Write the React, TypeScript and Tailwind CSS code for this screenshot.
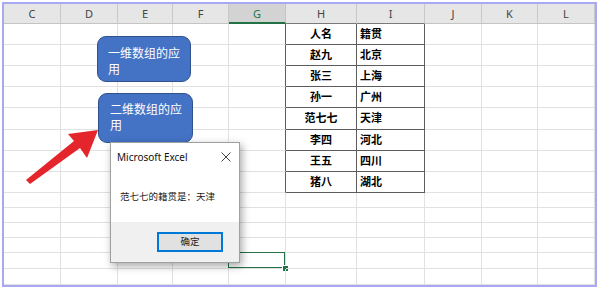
import React from "react"

const cols = ['C', 'D', 'E', 'F', 'G', 'H', 'I', 'J', 'K', 'L']
const names = ['人名', '赵九', '张三', '孙一', '范七七', '李四', '王五', '猪八']
const places = ['籍贯', '北京', '上海', '广州', '天津', '河北', '四川', '湖北']
const rowCount = 14

function HeaderCell({ col }: { col: string }) {
    const selected = col === 'G'
    const inTable = col === 'H' || col === 'I'
    return (
        <div
            className={`flex items-center justify-center border-r border-b text-[11px] leading-none ${selected
                ? 'bg-[#d3d3d3] border-r-[#c4c4c4] border-b-2 border-b-[#217346] text-[#217346]'
                : inTable
                    ? 'bg-[#e6e6e6] border-r-[#c9c9c9] border-b-[#7a7a7a] text-[#444]'
                    : 'bg-[#e6e6e6] border-r-[#c9c9c9] border-b-[#c4c4c4] text-[#444]'}`}
        >
            {col}
        </div>
    )
}

function Cell({ r, c }: { r: number; c: number }) {
    const inTable = r <= 8
    const col = cols[c]
    const tableCol = inTable && (col === 'H' || col === 'I')
    const rightDark = inTable && (col === 'G' || col === 'H' || col === 'I')
    const selected = r === 13 && col === 'G'

    return (
        <div
            className={`relative flex items-center border-r border-b text-[11px] font-bold text-black ${rightDark ? 'border-r-[#5c5c5c]' : 'border-r-[#e1e1e1]'} ${tableCol ? 'border-b-[#5c5c5c]' : 'border-b-[#e1e1e1]'} ${col === 'H' ? 'justify-center' : 'pl-[3px]'}`}
        >
            {tableCol && col === 'H' && names[r - 1]}
            {tableCol && col === 'I' && places[r - 1]}
            {selected && (
                <div className="absolute -left-px -top-px right-0 bottom-0 border-[1.5px] border-[#217346]">
                    <div className="absolute right-[-4px] bottom-[-4px] w-[5px] h-[5px] bg-[#217346] outline outline-1 outline-white" />
                </div>
            )}
        </div>
    )
}

export default function App() {
    const rows = Array.from({ length: rowCount }, (_, i) => i + 1)

    return (
        <div className="w-[600px] h-[290px] bg-white overflow-hidden font-['Noto_Sans','Noto_Sans_CJK_SC',sans-serif]">
            <div className="relative ml-[2px] mt-[2px] w-[595px] h-[285px] border-2 border-[#a9a9f3]">
                <div className="grid grid-cols-[57px_57px_55px_56px_57px_71px_68px_57px_56px_57px] grid-rows-[20px_21px_21px_21px_21px_22px_21px_21px_21px_15px_15px_15px_15px_16px_16px] font-['Noto_Sans','Noto_Sans_CJK_SC',sans-serif]">
                    {cols.map(c => <HeaderCell key={c} col={c} />)}
                    {rows.map(r => cols.map((_, c) => <Cell key={`${r}-${c}`} r={r} c={c} />))}
                </div>

                {/* shapes */}
                <div className="absolute left-[93px] top-[32px] w-[94px] h-[46px] rounded-[9px] bg-[#4472c4] border border-[#2f528f] pl-[10px] pr-[2px] pt-[8px] text-[12px] leading-[16px] text-white font-['Noto_Sans_CJK_SC',sans-serif]">
                    一维数组的应用
                </div>
                <div className="absolute left-[94px] top-[89px] w-[95px] h-[50px] rounded-[9px] bg-[#4472c4] border border-[#2f528f] pl-[11px] pr-[2px] pt-[7px] text-[12px] leading-[16px] text-white font-['Noto_Sans_CJK_SC',sans-serif]">
                    二维数组的应用
                </div>

                {/* arrow */}
                <svg className="absolute left-[-4px] top-[-4px] pointer-events-none" width="130" height="200" viewBox="0 0 130 200">
                    <polygon points="26,180 74,141 68,134 98,130 87,158 80,148 30,184" fill="#e5252c" />
                </svg>

                {/* dialog */}
                <div className="absolute left-[106px] top-[138px] w-[130px] h-[121px] bg-white border border-[#a0a0a0] shadow-[2px_3px_8px_rgba(0,0,0,0.35)] flex flex-col">
                    <div className="flex items-center justify-between h-[26px] pl-[6px] pr-[8px] pt-[2px]">
                        <span className="text-[10px] text-[#111] font-['Noto_Sans',sans-serif]">Microsoft Excel</span>
                        <svg width="10" height="10" viewBox="0 0 10 10">
                            <path d="M0.5 0.5 L9.5 9.5 M9.5 0.5 L0.5 9.5" stroke="#444" strokeWidth="1" />
                        </svg>
                    </div>
                    <div className="flex-1 pl-[9px] pt-[23px] text-[9.5px] leading-none whitespace-nowrap text-[#222] font-['Noto_Sans_CJK_SC',sans-serif]">
                        范七七的籍贯是：天津
                    </div>
                    <div className="h-[40px] bg-[#f0f0f0] flex items-center justify-end pr-[16px]">
                        <button className="w-[66px] h-[20px] bg-[#e1e1e1] border-2 border-[#0078d7] text-[9.5px] text-[#222] leading-none font-['Noto_Sans_CJK_SC',sans-serif]">
                            确定
                        </button>
                    </div>
                </div>
            </div>
        </div>
    )
}
